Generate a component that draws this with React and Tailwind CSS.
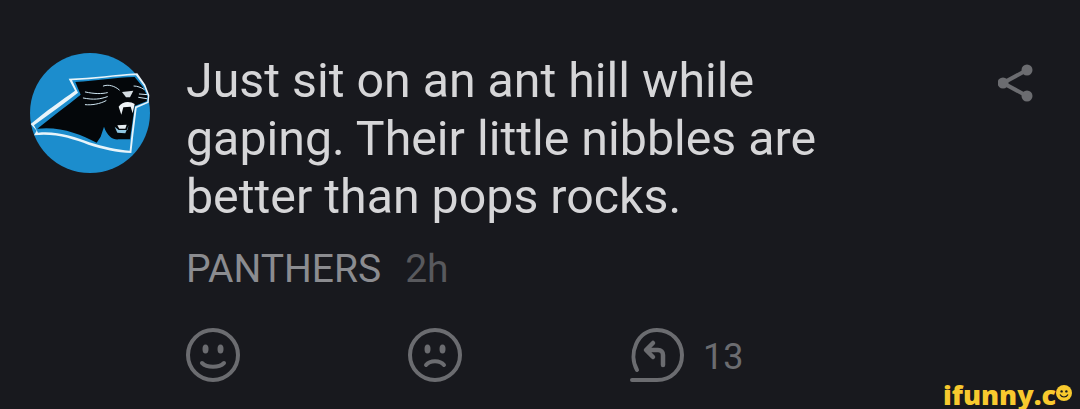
import React from 'react';

const PanthersLogo = () => (
  <svg width="120" height="120" viewBox="30 23 360 360" className="shrink-0">
    <circle cx="210" cy="203" r="180" fill="#1c8dcd" />
    {/* white outline */}
    <path d="M32 236 C80 195 125 165 165 136 L146 100 C220 98 290 88 352 84 L376 118 L388 150 L386 172 L350 188 L340 268 L334 323 C290 322 250 312 205 298 C160 280 100 262 42 270 L50 256 Z" fill="#e8f4fa" />
    {/* blue outline */}
    <path d="M42 240 C90 205 135 172 174 142 L156 105 C225 102 285 92 348 90 L372 122 L384 152 L382 169 L345 184 L335 262 L329 316 C290 314 250 304 208 291 C165 274 110 256 54 262 Z" fill="#1c8dcd" />
    {/* black body */}
    <path d="M52 250 C96 214 142 180 182 148 L166 110 C230 106 285 97 344 95 L368 124 L382 152 L380 168 L344 182 L336 240 L330 282 L296 282 C280 284 262 274 252 244 L242 274 L230 292 C180 266 120 242 52 250 Z" fill="#04070a" />
    {/* whiskers and brow */}
    <path d="M196 140 C225 146 245 146 262 142 M190 158 C220 164 240 162 262 154 M196 178 C215 180 240 176 258 166 M250 122 C265 116 285 122 298 134 M342 122 C352 122 362 126 372 132 M358 146 L382 148 M356 156 L380 160" stroke="#cfe6f2" strokeWidth="3" fill="none" strokeLinecap="round" />
    {/* nose */}
    <path d="M306 140 L340 136 L330 156 L318 156 Z" fill="#d5dde2" />
    {/* upper jaw and fangs */}
    <path d="M296 184 C305 168 330 166 344 176 L338 204 L332 184 L310 186 L304 208 Z" fill="#eef3f6" />
    {/* lower jaw */}
    <path d="M284 244 L292 262 L316 264 L326 240 L322 254 L296 254 Z" fill="#8fc6e2" />
    <path d="M292 240 L320 238 L316 250 L298 250 Z" fill="#e6edf1" />
  </svg>
);

const Face = ({ sad }) => (
  <svg width="54" height="54" viewBox="0 0 54 54" fill="none" stroke="#6b6c70" strokeWidth="4" strokeLinecap="round">
    <circle cx="27" cy="27" r="25" />
    <ellipse cx="19.5" cy="21" rx="3" ry="4.5" fill="#6b6c70" stroke="none" />
    <ellipse cx="34.5" cy="21" rx="3" ry="4.5" fill="#6b6c70" stroke="none" />
    {sad
      ? <path d="M18 37 C22 32 32 32 36 37" />
      : <path d="M16 35 C21 40 33 40 38 35" />}
  </svg>
);

const ReplyIcon = () => (
  <svg width="54" height="54" viewBox="0 0 54 54" fill="none" stroke="#6b6c70" strokeWidth="4" strokeLinecap="round" strokeLinejoin="round">
    <path d="M7 42 C-2 26 7 2 27 2 C41 2 52 13 52 27 C52 42 41 52 27 52 L2 52" />
    <path d="M33 37 L33 27 C33 24 31 22 28 22 L17 22 M23 15 L16 22 L23 29" strokeWidth="4.5" />
  </svg>
);

const ShareIcon = () => (
  <svg width="36" height="38" viewBox="0 0 36 38" fill="#6b6c70" stroke="#6b6c70">
    <path d="M29 6 L5 19 L29 32" fill="none" strokeWidth="4" />
    <circle cx="29" cy="6" r="5.5" stroke="none" />
    <circle cx="5" cy="19" r="5.5" stroke="none" />
    <circle cx="29" cy="32" r="5.5" stroke="none" />
  </svg>
);

export default function App() {
  return (
    <div className="relative w-[1080px] h-[409px] overflow-hidden bg-[#18191e] font-['Roboto',sans-serif] flex items-start pl-[30px] pt-[53px]">
      <PanthersLogo />

      {/* Comment */}
      <div className="ml-[36px] w-[700px] -mt-[1px]">
        <p className="text-[48.3px] leading-[58px] text-[#d6d6d8]">
          Just sit on an ant hill while<br />
          gaping. Their little nibbles are<br />
          better than pops rocks.
        </p>
        <div className="mt-[22px] flex items-center gap-[24px] text-[39px] leading-[42px]">
          <span className="text-[#8b8c90]">PANTHERS</span>
          <span className="text-[#58595d]">2h</span>
        </div>
        <div className="mt-[38px] flex items-center">
          <Face />
          <div className="ml-[168px]"><Face sad /></div>
          <div className="ml-[168px]"><ReplyIcon /></div>
          <span className="ml-[19px] mt-[4px] text-[36px] leading-[42px] text-[#6b6c70]">13</span>
        </div>
      </div>

      <div className="ml-[112px] mt-[11px]">
        <ShareIcon />
      </div>

      {/* Watermark */}
      <div className="absolute right-[8px] bottom-[-4px] flex items-center font-['Open_Sans',sans-serif] text-[27px] font-extrabold leading-[36px] text-[#f8c92e]">
        <span>ifunny.c</span>
        <svg width="16" height="16" viewBox="0 0 20 20" className="-mt-[4px]">
          <circle cx="10" cy="10" r="10" fill="#f8c92e" />
          <circle cx="7" cy="8" r="1.5" fill="#18191e" />
          <circle cx="13" cy="8" r="1.5" fill="#18191e" />
          <path d="M5 12 C7 16 13 16 15 12" fill="none" stroke="#18191e" strokeWidth="1.5" />
        </svg>
      </div>
    </div>
  );
}
